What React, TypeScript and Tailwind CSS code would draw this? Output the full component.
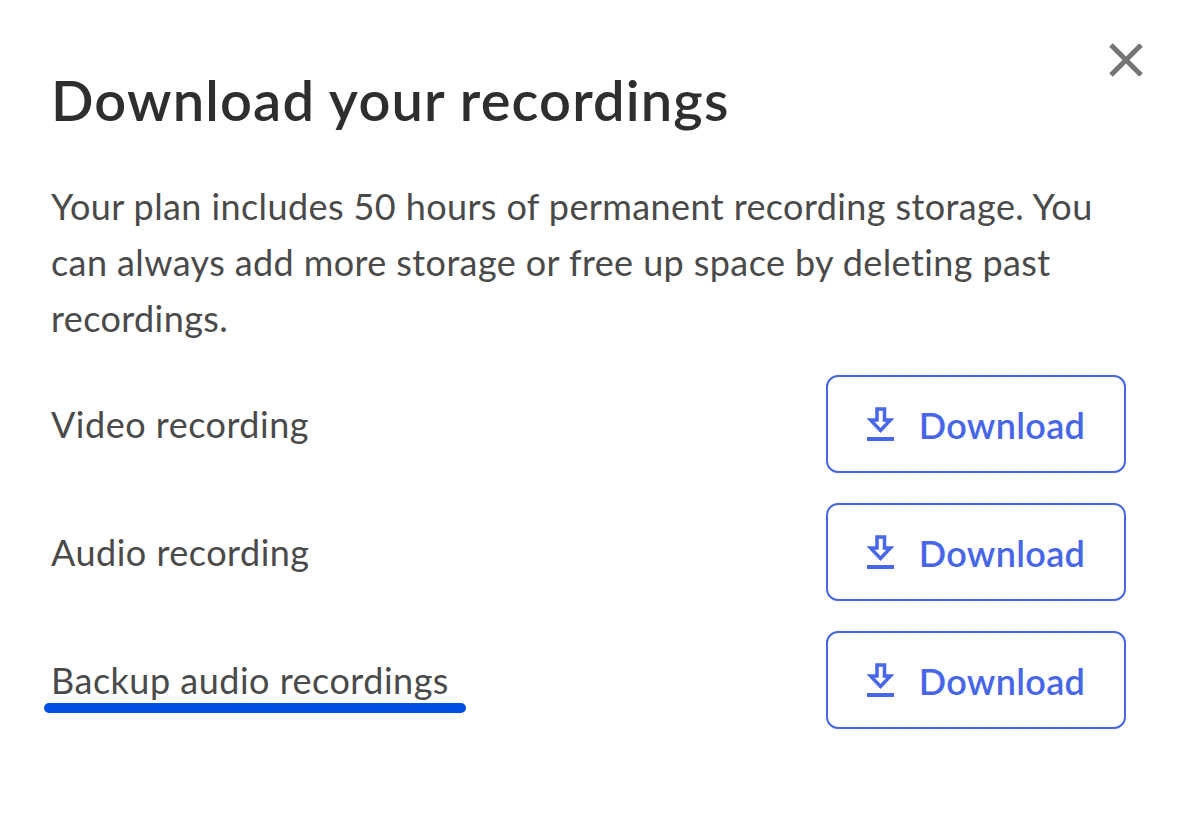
const rows = [
  { label: "Video recording", marked: false },
  { label: "Audio recording", marked: false },
  { label: "Backup audio recordings", marked: true },
];

function DownloadIcon() {
  return (
    <svg width="27" height="34" viewBox="0 0 27 34" fill="none" className="shrink-0">
      <path d="M10 2h7.500v11h6L13.500 23.500 3.500 13h6.500z" stroke="#4766E8" strokeWidth="3.500" />
      <path d="M0 32h27" stroke="#4766E8" strokeWidth="4" />
    </svg>
  );
}

export default function App() {
  return (
    <div className="relative w-[1177px] h-[815px] overflow-hidden bg-white px-[51px] pt-[65px] font-['Lato',sans-serif]">
      {/* Close */}
      <button aria-label="Close" className="absolute top-[41px] right-[32px] w-[38px] h-[38px]">
        <svg width="38" height="38" viewBox="0 0 38 38" fill="none">
          <path d="M4 4l30 30M34 4L4 34" stroke="#757575" strokeWidth="5" />
        </svg>
      </button>

      <h1 className="text-[56px] leading-[70px] font-semibold text-[#2e2e2e] tracking-[1.15px]">
        Download your recordings
      </h1>

      <p className="mt-[43px] w-[1060px] text-[36px] leading-[56px] tracking-[0.4px] text-[#4a4a4a]">
        Your plan includes 50 hours of permanent recording storage. You can always add more storage or free up space by deleting past recordings.
      </p>

      <div className="mt-[29px] flex flex-col gap-[30px]">
        {rows.map((row) => (
          <div key={row.label} className="flex items-center justify-between">
            <span className="relative text-[36px] leading-[56px] tracking-[0.5px] text-[#4a4a4a]">
              {row.label}
              {row.marked && (
                <span className="absolute left-[-7px] right-[-17px] top-[51px] h-[10px] rounded-full bg-[#0050E6]" />
              )}
            </span>
            <button className="w-[300px] h-[98px] flex items-center justify-center gap-[25px] rounded-[12px] border-2 border-[#4766E8] bg-white text-[36px] font-semibold tracking-[0.3px] text-[#4766E8]">
              <DownloadIcon />
              <span className="mt-[2px]">Download</span>
            </button>
          </div>
        ))}
      </div>
    </div>
  );
}
